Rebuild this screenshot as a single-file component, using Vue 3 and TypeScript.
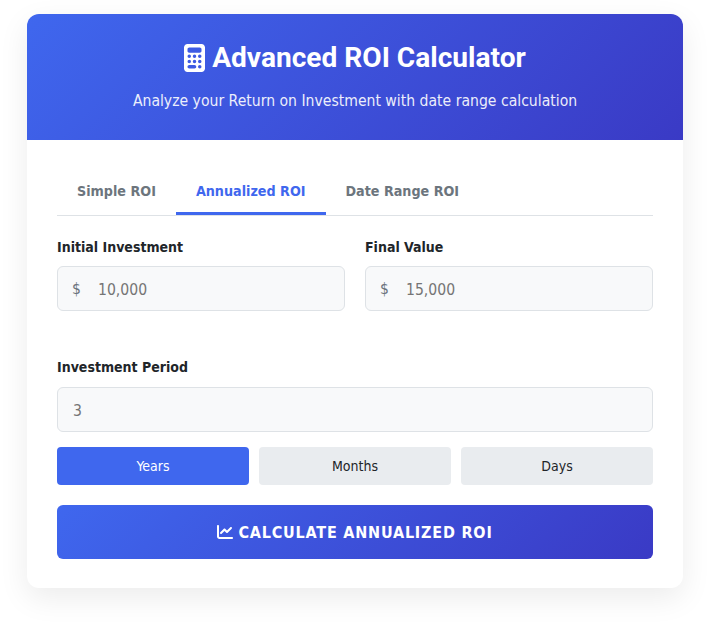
<template>
  <div class="page">
    <div class="card">
      <header class="hero">
        <h1 class="title">
          <svg class="calc-icon" viewBox="0 0 384 512" aria-hidden="true">
            <path
              fill="#fff"
              d="M64 0C28.7 0 0 28.7 0 64V448c0 35.3 28.7 64 64 64H320c35.3 0 64-28.7 64-64V64c0-35.3-28.7-64-64-64H64zM96 64H288c17.7 0 32 14.3 32 32v32c0 17.7-14.3 32-32 32H96c-17.7 0-32-14.3-32-32V96c0-17.7 14.3-32 32-32zm32 160a32 32 0 1 1 -64 0 32 32 0 1 1 64 0zM96 352a32 32 0 1 1 0-64 32 32 0 1 1 0 64zM64 416c0-17.7 14.3-32 32-32h96c17.7 0 32 14.3 32 32s-14.3 32-32 32H96c-17.7 0-32-14.3-32-32zM192 256a32 32 0 1 1 0-64 32 32 0 1 1 0 64zm32 64a32 32 0 1 1 -64 0 32 32 0 1 1 64 0zm64-64a32 32 0 1 1 0-64 32 32 0 1 1 0 64zm32 64a32 32 0 1 1 -64 0 32 32 0 1 1 64 0zM288 448a32 32 0 1 1 0-64 32 32 0 1 1 0 64z"
            />
          </svg>
          Advanced ROI Calculator
        </h1>
        <p class="subtitle">Analyze your Return on Investment with date range calculation</p>
      </header>

      <div class="body">
        <div class="tabs">
          <button
            v-for="tab in tabs"
            :key="tab"
            :class="['tab', { active: tab === activeTab }]"
            @click="activeTab = tab"
          >
            {{ tab }}
          </button>
        </div>

        <div class="row">
          <div class="field">
            <label class="label">Initial Investment</label>
            <div class="money">
              <span class="currency">$</span>
              <input class="input with-prefix" type="text" placeholder="10,000" />
            </div>
          </div>
          <div class="field">
            <label class="label">Final Value</label>
            <div class="money">
              <span class="currency">$</span>
              <input class="input with-prefix" type="text" placeholder="15,000" />
            </div>
          </div>
        </div>

        <div class="field period">
          <label class="label">Investment Period</label>
          <input class="input" type="text" placeholder="3" />
        </div>

        <div class="units">
          <button
            v-for="unit in units"
            :key="unit"
            :class="['unit', { active: unit === activeUnit }]"
            @click="activeUnit = unit"
          >
            {{ unit }}
          </button>
        </div>

        <button class="calculate">
          <svg class="chart-icon" viewBox="0 0 512 512" aria-hidden="true">
            <path
              fill="#fff"
              d="M64 64c0-17.7-14.3-32-32-32S0 46.3 0 64V400c0 44.2 35.8 80 80 80H480c17.7 0 32-14.3 32-32s-14.3-32-32-32H80c-8.8 0-16-7.2-16-16V64zm406.6 86.6c12.5-12.5 12.5-32.8 0-45.3s-32.8-12.5-45.3 0L320 210.7l-57.4-57.4c-12.5-12.5-32.8-12.5-45.3 0l-112 112c-12.5 12.5-12.5 32.8 0 45.3s32.8 12.5 45.3 0L240 221.3l57.4 57.4c12.5 12.5 32.8 12.5 45.3 0l128-128z"
            />
          </svg>
          CALCULATE ANNUALIZED ROI
        </button>
      </div>
    </div>
  </div>
</template>

<script setup lang="ts">
import { ref } from 'vue'

const tabs = ['Simple ROI', 'Annualized ROI', 'Date Range ROI']
const units = ['Years', 'Months', 'Days']

const activeTab = ref('Annualized ROI')
const activeUnit = ref('Years')
</script>

<style scoped>
.page {
  padding: 14px 34px 35px 27px;
  font-family: "DejaVu Sans", sans-serif;
  font-stretch: condensed;
}

.card {
  background: #fff;
  border-radius: 12px;
  overflow: hidden;
  box-shadow: 0 10px 30px rgba(0, 0, 0, 0.08);
}

.hero {
  height: 126px;
  box-sizing: border-box;
  padding-top: 25px;
  text-align: center;
  color: #fff;
  background: linear-gradient(135deg, #3f67ee, #3a3ac5);
}

.title {
  margin: 0 0 14px;
  display: flex;
  justify-content: center;
  align-items: center;
  gap: 7px;
  font-family: Roboto, sans-serif;
  font-stretch: normal;
  font-size: 28.1px;
  font-weight: 700;
  line-height: 38px;
}

.calc-icon {
  width: 21px;
  height: 28px;
}

.subtitle {
  margin: 0;
  font-size: 15.6px;
  line-height: 20px;
  opacity: 0.9;
}

.body {
  padding: 30px 30px 29px;
}

.tabs {
  display: flex;
  border-bottom: 1px solid #dee2e6;
  margin-bottom: 21px;
}

.tab {
  all: unset;
  padding: 0 20px;
  height: 42px;
  border-bottom: 3px solid transparent;
  font-size: 14.2px;
  font-weight: 700;
  color: #6c757d;
  cursor: pointer;
}

.tab.active {
  color: #3f67ee;
  border-bottom-color: #3f67ee;
}

.row {
  display: flex;
  gap: 20px;
}

.row .field {
  flex: 1;
}

.field {
  display: flex;
  flex-direction: column;
}

.period {
  margin-top: 46px;
}

.label {
  font-size: 14px;
  font-weight: 700;
  line-height: 20px;
  color: #212529;
  margin-bottom: 9px;
}

.period .label {
  margin-bottom: 10px;
}

.money {
  position: relative;
}

.currency {
  position: absolute;
  left: 15px;
  top: 13px;
  font-size: 15.5px;
  line-height: 20px;
  color: #6c757d;
}

.input {
  width: 100%;
  box-sizing: border-box;
  height: 45px;
  padding: 2px 15px 0;
  border: 1px solid #dee2e6;
  border-radius: 6px;
  background: #f8f9fa;
  font-family: inherit;
  font-stretch: condensed;
  font-size: 15.6px;
  outline: none;
}

.input.with-prefix {
  padding-left: 40px;
}

.units {
  display: flex;
  gap: 10px;
  margin-top: 15px;
}

.unit {
  all: unset;
  flex: 1;
  height: 38px;
  text-align: center;
  border-radius: 4px;
  background: #e9ecef;
  color: #212529;
  font-size: 14px;
  cursor: pointer;
}

.unit.active {
  background: #3f67ee;
  color: #fff;
}

.calculate {
  all: unset;
  display: flex;
  justify-content: center;
  align-items: center;
  gap: 5px;
  width: 100%;
  box-sizing: border-box;
  height: 54px;
  margin-top: 20px;
  border-radius: 6px;
  background: linear-gradient(135deg, #3f67ee, #3a3ac5);
  color: #fff;
  font-size: 16px;
  font-weight: 700;
  letter-spacing: 0.8px;
  cursor: pointer;
}

.chart-icon {
  width: 16px;
  height: 16px;
}
</style>
